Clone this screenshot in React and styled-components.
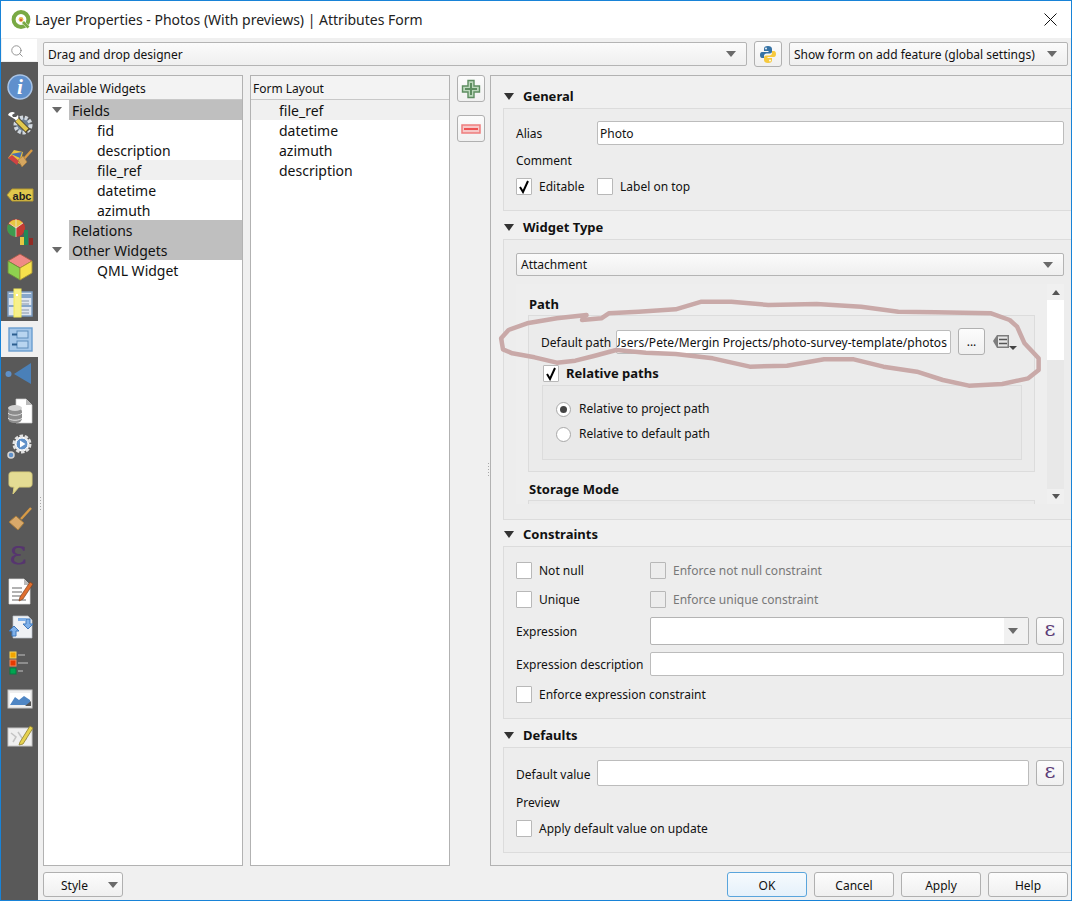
import styled, { createGlobalStyle } from 'styled-components';
import { Search } from 'lucide-react';

const GlobalStyle = createGlobalStyle`
  html, body {
    margin: 0;
    padding: 0;
    background: #f0f0f0;
  }
  * {
    box-sizing: border-box;
  }
  body {
    font-family: 'Noto Sans', 'DejaVu Sans', sans-serif;
    font-size: 12px;
    color: #111;
  }
`;

const Window = styled.div`
  position: relative;
  width: 1072px;
  height: 901px;
  display: flex;
  flex-direction: column;
  overflow: hidden;
  background: #f0f0f0;
  border: 1px solid #1883d7;
`;

const TitleBar = styled.div`
  height: 37px;
  flex: none;
  display: flex;
  align-items: center;
  padding: 0 13px 0 10px;
  background: #fff;
`;

const TitleText = styled.div`
  flex: 1;
  margin-left: 4px;
  font-size: 14px;
  color: #222;
`;

const Body = styled.div`
  flex: 1;
  min-height: 0;
  display: flex;
`;

const Sidebar = styled.div`
  width: 37px;
  flex: none;
  display: flex;
  flex-direction: column;
  background: #595959;
`;

const SearchBox = styled.div`
  height: 24px;
  flex: none;
  padding: 1px 0 0 1px;
  background: #f0f0f0;
  & > div {
    height: 22px;
    width: 35px;
    display: flex;
    padding: 5px 0 0 8px;
    background: #fff;
    color: #888;
  }
`;

const SideList = styled.div`
  margin-top: 7px;
  display: flex;
  flex-direction: column;
`;

const SideItem = styled.div`
  height: 36px;
  display: flex;
  align-items: center;
  justify-content: center;
  background: ${(p) => (p.$active ? '#f0f0f0' : 'transparent')};
`;

const IconSvg = styled.svg`
  overflow: visible;
`;

const Splitter = styled.div`
  width: ${(p) => p.$width}px;
  flex: none;
  display: flex;
  align-items: center;
  justify-content: center;
  & > span {
    width: 1px;
    height: 15px;
    margin-top: ${(p) => p.$top}px;
    background-image: linear-gradient(#a8a8a8 50%, transparent 50%);
    background-size: 1px 3px;
  }
`;

const Main = styled.div`
  flex: 1;
  min-width: 0;
  display: flex;
  flex-direction: column;
`;

const TopRow = styled.div`
  height: 26px;
  flex: none;
  margin: 3px 3px 8px 0;
  display: flex;
  align-items: center;
  gap: 7px;
`;

const Combo = styled.div`
  height: ${(p) => p.$height || 24}px;
  width: ${(p) => (p.$width ? `${p.$width}px` : 'auto')};
  flex: ${(p) => (p.$width ? 'none' : '1')};
  display: flex;
  align-items: center;
  justify-content: space-between;
  padding: 0 10px 0 4px;
  border: 1px solid #b4b4b4;
  border-radius: 2px;
  background: linear-gradient(#fbfbfb, #efefef);
  white-space: nowrap;
`;

const EditCombo = styled.div`
  height: 28px;
  flex: 1;
  display: flex;
  justify-content: flex-end;
  overflow: hidden;
  background: #fff;
  border: 1px solid #b4b4b4;
  border-radius: 2px;
`;

const ComboCell = styled.div`
  width: 24px;
  display: flex;
  align-items: center;
  padding-left: 4px;
  background: #f1f1f1;
`;

const Arrow = styled.span`
  width: 0;
  height: 0;
  flex: none;
  border-left: 5px solid transparent;
  border-right: 5px solid transparent;
  border-top: 6px solid ${(p) => p.$color || '#6a6a6a'};
`;

const HeaderArrow = styled.span`
  width: 0;
  height: 0;
  flex: none;
  border-left: 5.5px solid transparent;
  border-right: 5.5px solid transparent;
  border-top: 7px solid #333;
`;

const Button = styled.div`
  width: ${(p) => p.$width}px;
  height: ${(p) => p.$height}px;
  flex: none;
  display: flex;
  align-items: center;
  justify-content: center;
  border: 1px solid ${(p) => (p.$primary ? '#5aa5dc' : '#b0b0b0')};
  border-radius: 3px;
  background: ${(p) =>
    p.$primary
      ? 'linear-gradient(#f6fafd, #e5f1fb)'
      : 'linear-gradient(#fcfcfc, #f0f0f0)'};
`;

const Panels = styled.div`
  flex: 1;
  min-height: 0;
  display: flex;
`;

const ListPanel = styled.div`
  width: 200px;
  flex: none;
  background: #fff;
  border: 1px solid #b2b2b2;
`;

const ListHeader = styled.div`
  height: 24px;
  padding: 1px 0 0 2px;
  display: flex;
  align-items: center;
  background: #f3f3f3;
  border-bottom: 1px solid #c8c8c8;
  font-size: 12px;
`;

const TreeRow = styled.div`
  height: 20px;
  display: flex;
  align-items: center;
  font-size: 14px;
  background: ${(p) => (p.$selected ? '#f0f0f0' : 'transparent')};
  padding-left: ${(p) => p.$indent}px;
`;

const GroupRow = styled.div`
  height: 20px;
  display: flex;
  align-items: center;
  font-size: 14px;
`;

const Twisty = styled.div`
  width: 25px;
  flex: none;
  display: flex;
  justify-content: flex-end;
  padding-right: 7px;
  margin-top: -1px;
`;

const GroupName = styled.div`
  flex: 1;
  height: 20px;
  line-height: 21px;
  padding-left: 3px;
  background: #bfbfbf;
`;

const PanelGap = styled.div`
  width: 7px;
  flex: none;
`;

const ButtonColumn = styled.div`
  width: 37px;
  flex: none;
  padding-left: 7px;
  display: flex;
  flex-direction: column;
  gap: 13px;
`;

const FormPanel = styled.div`
  flex: 1;
  min-width: 0;
  overflow: hidden;
  padding-top: 8px;
  border: 1px solid #b2b2b2;
  border-right: 0;
  background: #f0f0f0;
`;

const GroupHeader = styled.div`
  height: 24px;
  margin-left: 13px;
  display: flex;
  align-items: center;
  gap: 9px;
  font-size: 13px;
  font-weight: 700;
`;

const GroupBox = styled.div`
  height: ${(p) => p.$height}px;
  margin: 0 -3px ${(p) => p.$after}px 12px;
  padding: 0 9px 0 12px;
  border: 1px solid #dcdcdc;
  background: #ededed;
`;

const Row = styled.div`
  height: ${(p) => p.$height}px;
  margin-top: ${(p) => p.$top}px;
  display: ${(p) => (p.$grid ? 'grid' : 'flex')};
  grid-template-columns: ${(p) => p.$grid};
  align-items: center;
`;

const RowLabel = styled.span`
  padding-top: ${(p) => p.$nudge || 0}px;
`;

const Field = styled.div`
  height: ${(p) => p.$height || 24}px;
  flex: 1;
  min-width: 0;
  display: flex;
  align-items: center;
  padding: 0 2px;
  overflow: hidden;
  white-space: nowrap;
  background: #fff;
  border: 1px solid #bcbcbc;
  border-radius: 2px;
`;

const FieldPair = styled.div`
  display: flex;
  align-items: center;
  gap: 7px;
`;

const Check = styled.label`
  display: flex;
  align-items: center;
  gap: 7px;
  color: ${(p) => (p.$disabled ? '#787878' : '#111')};
  font-weight: ${(p) => (p.$bold ? 700 : 400)};
  font-size: ${(p) => (p.$bold ? '13px' : '12px')};
`;

const CheckBox = styled.span`
  width: 16px;
  height: 17px;
  flex: none;
  display: flex;
  align-items: center;
  justify-content: center;
  background: ${(p) => (p.$disabled ? '#ededed' : '#fff')};
  border: 1px solid #b8b8b8;
  border-radius: 1px;
`;

const ScrollArea = styled.div`
  height: 220px;
  margin-top: 8px;
  display: flex;
  overflow: hidden;
  background: #eee;
`;

const ScrollContent = styled.div`
  flex: 1;
  min-width: 0;
  overflow: hidden;
  padding: 10px 12px 0;
`;

const Subtitle = styled.div`
  height: 21px;
  line-height: 20px;
  margin-left: 1px;
  font-size: 13px;
  font-weight: 700;
`;

const PathBox = styled.div`
  height: ${(p) => p.$height}px;
  border: 1px solid #dcdcdc;
  background: #ebebeb;
  ${(p) => (p.$open ? 'border-bottom: 0;' : '')}
`;

const PathRow = styled.div`
  height: 27px;
  margin: 12px 0 0 12px;
  display: flex;
  align-items: center;
  gap: 7px;
`;

const PathLabel = styled.div`
  width: 68px;
  flex: none;
  padding-top: 2px;
  white-space: nowrap;
`;

const PathField = styled.div`
  width: 335px;
  height: 24px;
  flex: none;
  display: flex;
  align-items: center;
  justify-content: flex-end;
  padding: 1px 3px 0 0;
  overflow: hidden;
  white-space: nowrap;
  letter-spacing: 0.06px;
  background: #fff;
  border: 1px solid #bcbcbc;
  border-radius: 2px;
`;

const RelativeRow = styled.div`
  margin: 9px 0 0 14px;
`;

const RadioBox = styled.div`
  width: 480px;
  height: 75px;
  margin: 3px 0 0 13px;
  padding: 15px 0 0 13px;
  display: flex;
  flex-direction: column;
  gap: 9px;
  border: 1px solid #dcdcdc;
  background: #e9e9e9;
`;

const RadioRow = styled.div`
  height: 16px;
  display: flex;
  align-items: center;
  gap: 8px;
`;

const RadioText = styled.span`
  margin-top: -2px;
`;

const Radio = styled.span`
  width: 15px;
  height: 15px;
  display: flex;
  align-items: center;
  justify-content: center;
  border: 1px solid #a8a8a8;
  border-radius: 50%;
  background: #fff;
  &::after {
    content: '';
    width: 7px;
    height: 7px;
    border-radius: 50%;
    background: ${(p) => (p.$on ? '#444' : 'transparent')};
  }
`;

const StorageTitle = styled(Subtitle)`
  margin-top: 7px;
`;

const Scrollbar = styled.div`
  width: 17px;
  flex: none;
  display: flex;
  flex-direction: column;
  background: #e8e8e8;
`;

const ScrollEnd = styled.div`
  height: ${(p) => p.$height}px;
  display: flex;
  align-items: center;
  justify-content: center;
  background: #f0f0f0;
  & > span {
    border-left: 4px solid transparent;
    border-right: 4px solid transparent;
    ${(p) => (p.$up ? 'border-bottom' : 'border-top')}: 5px solid #555;
  }
`;

const ScrollThumb = styled.div`
  height: 60px;
  background: #fff;
`;

const ScrollTrack = styled.div`
  flex: 1;
`;

const ExprGlyph = styled.span`
  font-family: 'DejaVu Serif', 'Liberation Serif', serif;
  font-size: 21px;
  line-height: 1;
  margin-top: -4px;
  color: #5d3d78;
`;

const Dots = styled.span`
  font-size: 12px;
`;

const Footer = styled.div`
  height: 34px;
  flex: none;
  padding: 6px 3px 0 0;
  display: flex;
  align-items: flex-start;
  gap: 7px;
`;

const FooterButton = styled(Button)`
  padding-top: 1px;
`;

const StyleButton = styled(FooterButton)`
  justify-content: space-between;
  padding: 1px 4px 0 17px;
  margin-right: auto;
`;

const Annotation = styled.svg`
  position: absolute;
  left: 0;
  top: 0;
  pointer-events: none;
`;

// points read off the reference, in zoomed crop coordinates
const SCRIBBLE = [
  [260, 135], [180, 145], [100, 160], [50, 180], [30, 205], [35, 238], [60, 250],
  [120, 262], [180, 278], [230, 272], [280, 258], [340, 240], [420, 248], [500, 252],
  [600, 265], [700, 290], [800, 287], [900, 268], [980, 268], [1060, 290], [1150, 305],
  [1220, 330], [1290, 347], [1380, 342], [1450, 325], [1478, 300], [1478, 265], [1440, 220],
  [1420, 170], [1400, 150], [1350, 130], [1200, 127], [1100, 125], [1000, 110], [880, 102],
  [750, 105], [650, 95], [570, 95], [500, 118], [400, 125], [320, 130], [300, 145], [248, 150],
];

const scribblePoints = SCRIBBLE.map(([x, y]) => `${x / 2.694 + 489},${y / 3 + 269}`).join(' ');

function CheckMark() {
  return (
    <svg width="14" height="15" viewBox="0 0 14 15">
      <path d="M3 8l3 5 5-11" fill="none" stroke="#000" strokeWidth="2" />
    </svg>
  );
}

function CheckItem({ checked, disabled, bold, children }) {
  return (
    <Check $disabled={disabled} $bold={bold}>
      <CheckBox $disabled={disabled}>{checked && <CheckMark />}</CheckBox>
      {children}
    </Check>
  );
}

function Section({ title, height, after, children }) {
  return (
    <>
      <GroupHeader>
        <HeaderArrow />
        {title}
      </GroupHeader>
      <GroupBox $height={height} $after={after}>
        {children}
      </GroupBox>
    </>
  );
}

function QgisLogo() {
  return (
    <svg width="20" height="20" viewBox="0 0 20 20">
      <circle cx="10" cy="9.5" r="7.4" fill="none" stroke="#79a944" strokeWidth="4" />
      <path d="M10 10l7 7" stroke="#fff" strokeWidth="3.4" />
      <path d="M12 12l5.500 5.500" stroke="#79a944" strokeWidth="2.800" />
      <circle cx="10" cy="9.5" r="2.4" fill="#e9b44c" />
      <circle cx="10" cy="10" r="1" fill="#c8432f" />
    </svg>
  );
}

function PythonIcon() {
  return (
    <svg width="18" height="19" viewBox="0 0 18 19">
      <path d="M9 1C6 1 5 2 5 4v2h4.500v1H3C1.500 7 1 8.500 1 10s.5 3 2 3h2v-2c0-1.500 1-2.500 2.500-2.500H11c1 0 2-1 2-2V4c0-2-1.500-3-4-3z" fill="#3572a5" />
      <path d="M9 18c3 0 4-1 4-3v-2H8.500v-1H15c1.500 0 2-1.500 2-3s-.5-3-2-3h-2v2c0 1.500-1 2.500-2.500 2.500H7c-1 0-2 1-2 2V15c0 2 1.500 3 4 3z" fill="#f6c93e" />
      <circle cx="7" cy="3.500" r=".9" fill="#fff" />
      <circle cx="11" cy="15.500" r=".9" fill="#fff" />
    </svg>
  );
}

function PlusIcon() {
  return (
    <svg width="20" height="20" viewBox="0 0 20 20">
      <path d="M7 1.500h6v5.500h5.500v6H13v5.500H7V13H1.500V7H7z" fill="#bcd8bc" stroke="#5d8d60" strokeWidth="1.400" />
      <path d="M10 4v12M4 10h12" stroke="#5d8d60" strokeWidth="2" />
    </svg>
  );
}

function MinusIcon() {
  return (
    <svg width="20" height="10" viewBox="0 0 20 10">
      <rect x="1" y="1" width="18" height="8" fill="#f6c8c8" stroke="#ee7d7d" strokeWidth="1.500" />
      <path d="M3 5h14" stroke="#ee5252" strokeWidth="2" />
    </svg>
  );
}

function DataDefined() {
  return (
    <svg width="27" height="20" viewBox="0 0 27 20">
      <path d="M1 9l4-6h12v13H5z" fill="#7d7d7d" />
      <path d="M6 4.500h9.500v10H6z" fill="#e6e6e6" />
      <path d="M7 7.500h8M7 11.500h8" stroke="#555" strokeWidth="1.500" />
      <path d="M17 14h8l-4 4z" fill="#444" />
    </svg>
  );
}

const sideIcons = [
  <>
    <circle cx="14" cy="14" r="12" fill="#5f90cd" stroke="#a9c4e6" strokeWidth="1.500" />
    <text x="14" y="21" textAnchor="middle" fontFamily="Liberation Serif" fontStyle="italic" fontWeight="700" fontSize="21" fill="#fff">i</text>
  </>,
  <>
    <circle cx="17" cy="16" r="7.500" fill="#6d7f92" stroke="#d2d8de" strokeWidth="4" strokeDasharray="3 1.600" />
    <path d="M2 6c1-3 5-4 7-2l-3 2 1 2 3 0 2-2c1 2 0 4-2 5z" fill="#fff" />
    <path d="M11 11l11 11" stroke="#54482a" strokeWidth="6" />
    <path d="M11 11l10 10" stroke="#e2c94d" strokeWidth="4" />
  </>,
  <>
    <path d="M2 13l6-8 9 2-3 12z" fill="#e8c33d" />
    <path d="M5 9l11-2-2 6z" fill="#4a6fb0" />
    <path d="M2 13l9 7 2-4-7-6z" fill="#cf4343" />
    <path d="M17 15l9-10" stroke="#d79a45" strokeWidth="2.400" />
    <path d="M12 15l5-4 4 6-5 5z" fill="#d6a760" stroke="#a67b3d" strokeWidth=".7" />
  </>,
  <>
    <path d="M1 14l5-6h21v12H6z" fill="#e0c84c" stroke="#b6992f" strokeWidth="1" />
    <text x="16" y="18.500" textAnchor="middle" fontFamily="Liberation Sans" fontWeight="700" fontSize="11" fill="#222">abc</text>
  </>,
  <>
    <circle cx="10" cy="11" r="9" fill="#c43b32" />
    <path d="M10 11L3 6a9 9 0 0 1 14 0z" fill="#e7c743" />
    <path d="M10 11v9a9 9 0 0 1-8-13z" fill="#3e9a4f" />
    <path d="M10 2v9M10 11L3 6M10 11l7-5M10 11v9" stroke="#eee" strokeWidth=".7" />
    <rect x="14" y="20" width="4" height="8" fill="#e7c743" />
    <rect x="18" y="13" width="4" height="15" fill="#1f8a58" />
    <rect x="23" y="21" width="4" height="7" fill="#912b24" />
  </>,
  <>
    <path d="M14 1L26 8 14 15 2 8z" fill="#ef8a86" stroke="#a85b48" strokeWidth=".9" />
    <path d="M2 8l12 7v12L2 20z" fill="#8fd14f" stroke="#6f8d3c" strokeWidth=".9" />
    <path d="M26 8L14 15v12l12-7z" fill="#f7e04c" stroke="#a99636" strokeWidth=".9" />
  </>,
  <>
    <rect x="2" y="3" width="24" height="24" fill="#dfe6ef" stroke="#7c9cc0" strokeWidth="1.500" />
    <path d="M2 5h24v4H2zM2 16h24v2H2z" fill="#86a6ca" />
    <path d="M13 12h10M13 15h10M13 21h10M13 24h10" stroke="#8897a8" strokeWidth="1" />
    <rect x="8" y="0" width="7" height="28" fill="#f7f08a" stroke="#f4e95a" strokeWidth="1" />
    <rect x="10" y="5" width="2" height="2" fill="#fff" />
  </>,
  <>
    <rect x="3" y="3" width="23" height="23" fill="#a6c8ea" stroke="#6a9dcf" strokeWidth="1.400" />
    <rect x="11" y="6" width="11" height="7" fill="#b9d5f0" stroke="#5e8dbb" strokeWidth="1" />
    <rect x="11" y="16" width="11" height="7" fill="#b9d5f0" stroke="#5e8dbb" strokeWidth="1" />
    <path d="M6 9.500h5M6 19.500h5" stroke="#2d5f90" strokeWidth="2" />
  </>,
  <>
    <path d="M25 2v21L8 13z" fill="#4a80b8" />
    <circle cx="2.500" cy="13" r="3" fill="#5f90c8" />
  </>,
  <>
    <path d="M10 2h10l6 6v18H10z" fill="#fff" stroke="#ccc" strokeWidth=".7" />
    <path d="M20 2v6h6z" fill="#bbb" />
    <rect x="2" y="10" width="14" height="16" rx="5" fill="#8c8c8c" />
    <ellipse cx="9" cy="11" rx="7" ry="3" fill="#d0d0d0" />
    <path d="M2 16c2 3 12 3 14 0M2 21c2 3 12 3 14 0" fill="none" stroke="#e0e0e0" strokeWidth="1" />
  </>,
  <>
    <circle cx="16" cy="11" r="7.500" fill="#fff" stroke="#e2e2e2" strokeWidth="4" strokeDasharray="3.200 1.500" />
    <circle cx="16" cy="11" r="6" fill="#5f90c8" stroke="#fff" strokeWidth="1" />
    <path d="M14 7.500l5.500 3.500-5.500 3.500z" fill="#fff" />
    <circle cx="5" cy="22" r="3" fill="#5f90c8" stroke="#d6d6d6" strokeWidth="1.500" />
  </>,
  <>
    <path d="M6 3h17c2 0 3 1 3 3v9c0 2-1 3-3 3H13l-6 7 1-7H6c-2 0-3-1-3-3V6c0-2 1-3 3-3z" fill="#e4dc94" stroke="#d8cd7d" strokeWidth="1" />
  </>,
  <>
    <path d="M15 14l10-11" stroke="#d79a45" strokeWidth="2.400" />
    <path d="M10 11l8 7-6 7-9-8z" fill="#d9a96a" stroke="#a67b3d" strokeWidth="1" />
  </>,
  <>
    <text x="12" y="23" textAnchor="middle" fontFamily="DejaVu Serif" fontSize="34" fill="#56356f">ε</text>
  </>,
  <>
    <path d="M3 2h15l6 6v19H3z" fill="#fff" stroke="#ddd" strokeWidth=".7" />
    <path d="M18 2v6h6z" fill="#bbb" />
    <path d="M6 11h10M6 15h10M6 19h10M6 23h14" stroke="#999" strokeWidth="1.300" />
    <path d="M14 20l10-15 3 2-10 15-4 2z" fill="#e06f2f" stroke="#7d4020" strokeWidth=".7" />
  </>,
  <>
    <path d="M7 3h15l4 4v18H7z" fill="#eef1f5" stroke="#b7bec8" strokeWidth=".7" />
    <path d="M2 14l5-5 5 5H9v5H5v-5z" fill="#7fb0e8" stroke="#3e78bd" strokeWidth="1" transform="translate(1 4)" />
    <path d="M27 11l-5 5-5-5h3V6h4v5z" fill="#7fb0e8" stroke="#3e78bd" strokeWidth="1" />
    <path d="M12 5h8v3h-8z" fill="#7fb0e8" />
  </>,
  <>
    <rect x="4" y="3" width="6" height="6" fill="#f2a400" stroke="#f6d65d" />
    <rect x="4" y="11" width="6" height="6" fill="#e63a00" stroke="#f08a5c" />
    <rect x="4" y="19" width="6" height="6" fill="#00a651" stroke="#0a7a42" />
    <path d="M12 6h7M12 14h10M12 22h5" stroke="#8d8d8d" strokeWidth="2" />
  </>,
  <>
    <rect x="2" y="5" width="24" height="18" fill="#efefef" stroke="#c6c6c6" strokeWidth="1" />
    <path d="M4 8h20v12H4z" fill="#fff" />
    <path d="M4 20l5-8 4 3 5-4 6 4v5z" fill="#4f86c4" />
    <path d="M19 21l6-5v5z" fill="#555" />
  </>,
  <>
    <rect x="2" y="7" width="24" height="18" fill="#efefef" stroke="#c6c6c6" strokeWidth="1" />
    <path d="M5 12l5 4-3 5M12 11l4 6 5 1" fill="none" stroke="#c4c4c4" strokeWidth="1.500" />
    <path d="M14 21l10-16 3 2-10 16-4 1z" fill="#e6d24f" stroke="#8d7d2b" strokeWidth=".8" />
  </>,
];

const fields = ['fid', 'description', 'file_ref', 'datetime', 'azimuth'];
const layout = ['file_ref', 'datetime', 'azimuth', 'description'];

export default function App() {
  return (
    <>
      <GlobalStyle />
      <Window>
        <TitleBar>
          <QgisLogo />
          <TitleText>Layer Properties - Photos (With previews) | Attributes Form</TitleText>
          <svg width="15" height="15" viewBox="0 0 15 15">
            <path d="M1.500 1.500l12 12M13.500 1.500l-12 12" stroke="#111" strokeWidth="1" />
          </svg>
        </TitleBar>
        <Body>
          <Sidebar>
            <SearchBox>
              <div>
                <Search size={14} strokeWidth={1.5} />
              </div>
            </SearchBox>
            <SideList>
              {sideIcons.map((icon, i) => (
                <SideItem key={i} $active={i === 7}>
                  <IconSvg width="28" height="28" viewBox="0 0 28 28">{icon}</IconSvg>
                </SideItem>
              ))}
            </SideList>
          </Sidebar>
          <Splitter $width={5} $top={70}>
            <span />
          </Splitter>
          <Main>
            <TopRow>
              <Combo>
                Drag and drop designer
                <Arrow />
              </Combo>
              <Button $width={28} $height={26}>
                <PythonIcon />
              </Button>
              <Combo $width={279}>
                Show form on add feature (global settings)
                <Arrow />
              </Combo>
            </TopRow>
            <Panels>
              <ListPanel>
                <ListHeader>Available Widgets</ListHeader>
                <GroupRow>
                  <Twisty><Arrow /></Twisty>
                  <GroupName>Fields</GroupName>
                </GroupRow>
                {fields.map((name) => (
                  <TreeRow key={name} $indent={53} $selected={name === 'file_ref'}>
                    {name}
                  </TreeRow>
                ))}
                <GroupRow>
                  <Twisty />
                  <GroupName>Relations</GroupName>
                </GroupRow>
                <GroupRow>
                  <Twisty><Arrow /></Twisty>
                  <GroupName>Other Widgets</GroupName>
                </GroupRow>
                <TreeRow $indent={53}>QML Widget</TreeRow>
              </ListPanel>
              <PanelGap />
              <ListPanel>
                <ListHeader>Form Layout</ListHeader>
                {layout.map((name) => (
                  <TreeRow key={name} $indent={28} $selected={name === 'file_ref'}>
                    {name}
                  </TreeRow>
                ))}
              </ListPanel>
              <ButtonColumn>
                <Button $width={28} $height={27}><PlusIcon /></Button>
                <Button $width={28} $height={27}><MinusIcon /></Button>
              </ButtonColumn>
              <Splitter $width={3} $top={0}>
                <span />
              </Splitter>
              <FormPanel>
                <Section title="General" height={103} after={4}>
                  <Row $grid="81px 1fr" $height={24} $top={12}>
                    <span>Alias</span>
                    <Field>Photo</Field>
                  </Row>
                  <Row $height={18} $top={6}>Comment</Row>
                  <Row $grid="81px 1fr" $height={18} $top={8}>
                    <CheckItem checked>Editable</CheckItem>
                    <CheckItem>Label on top</CheckItem>
                  </Row>
                </Section>
                <Section title="Widget Type" height={281} after={2}>
                  <Row $height={23} $top={13}>
                    <Combo $height={23}>
                      Attachment
                      <Arrow />
                    </Combo>
                  </Row>
                  <ScrollArea>
                    <ScrollContent>
                      <Subtitle>Path</Subtitle>
                      <PathBox $height={157}>
                        <PathRow>
                          <PathLabel>Default path</PathLabel>
                          <PathField>Users/Pete/Mergin Projects/photo-survey-template/photos</PathField>
                          <Button $width={27} $height={27}><Dots>...</Dots></Button>
                          <DataDefined />
                        </PathRow>
                        <RelativeRow>
                          <CheckItem checked bold>Relative paths</CheckItem>
                        </RelativeRow>
                        <RadioBox>
                          <RadioRow>
                            <Radio $on />
                            <RadioText>Relative to project path</RadioText>
                          </RadioRow>
                          <RadioRow>
                            <Radio />
                            <RadioText>Relative to default path</RadioText>
                          </RadioRow>
                        </RadioBox>
                      </PathBox>
                      <StorageTitle>Storage Mode</StorageTitle>
                      <PathBox $height={20} $open />
                    </ScrollContent>
                    <Scrollbar>
                      <ScrollEnd $height={16} $up><span /></ScrollEnd>
                      <ScrollThumb />
                      <ScrollTrack />
                      <ScrollEnd $height={15}><span /></ScrollEnd>
                    </Scrollbar>
                  </ScrollArea>
                </Section>
                <Section title="Constraints" height={173} after={4}>
                  <Row $grid="134px 1fr" $height={18} $top={14}>
                    <CheckItem>Not null</CheckItem>
                    <CheckItem disabled>Enforce not null constraint</CheckItem>
                  </Row>
                  <Row $grid="134px 1fr" $height={18} $top={11}>
                    <CheckItem>Unique</CheckItem>
                    <CheckItem disabled>Enforce unique constraint</CheckItem>
                  </Row>
                  <Row $grid="134px 1fr" $height={28} $top={9}>
                    <span>Expression</span>
                    <FieldPair>
                      <EditCombo>
                        <ComboCell><Arrow /></ComboCell>
                      </EditCombo>
                      <Button $width={28} $height={28}><ExprGlyph>ε</ExprGlyph></Button>
                    </FieldPair>
                  </Row>
                  <Row $grid="134px 1fr" $height={24} $top={7}>
                    <span>Expression description</span>
                    <Field />
                  </Row>
                  <Row $height={18} $top={9}>
                    <CheckItem>Enforce expression constraint</CheckItem>
                  </Row>
                </Section>
                <Section title="Defaults" height={106} after={0}>
                  <Row $grid="81px 1fr" $height={26} $top={12}>
                    <RowLabel $nudge={2}>Default value</RowLabel>
                    <FieldPair>
                      <Field $height={26} />
                      <Button $width={28} $height={26}><ExprGlyph>ε</ExprGlyph></Button>
                    </FieldPair>
                  </Row>
                  <Row $height={18} $top={7}>Preview</Row>
                  <Row $height={18} $top={8}>
                    <CheckItem>Apply default value on update</CheckItem>
                  </Row>
                </Section>
              </FormPanel>
            </Panels>
            <Footer>
              <StyleButton $width={80} $height={25}>
                Style
                <Arrow />
              </StyleButton>
              <FooterButton $width={80} $height={25} $primary>OK</FooterButton>
              <FooterButton $width={80} $height={25}>Cancel</FooterButton>
              <FooterButton $width={80} $height={25}>Apply</FooterButton>
              <FooterButton $width={80} $height={25}>Help</FooterButton>
            </Footer>
          </Main>
        </Body>
        <Annotation width="1072" height="901" viewBox="0 0 1072 901">
          <polyline
            points={scribblePoints}
            fill="none"
            stroke="#c9a9a8"
            strokeWidth="4.500"
            strokeLinejoin="round"
            strokeLinecap="round"
          />
        </Annotation>
      </Window>
    </>
  );
}
